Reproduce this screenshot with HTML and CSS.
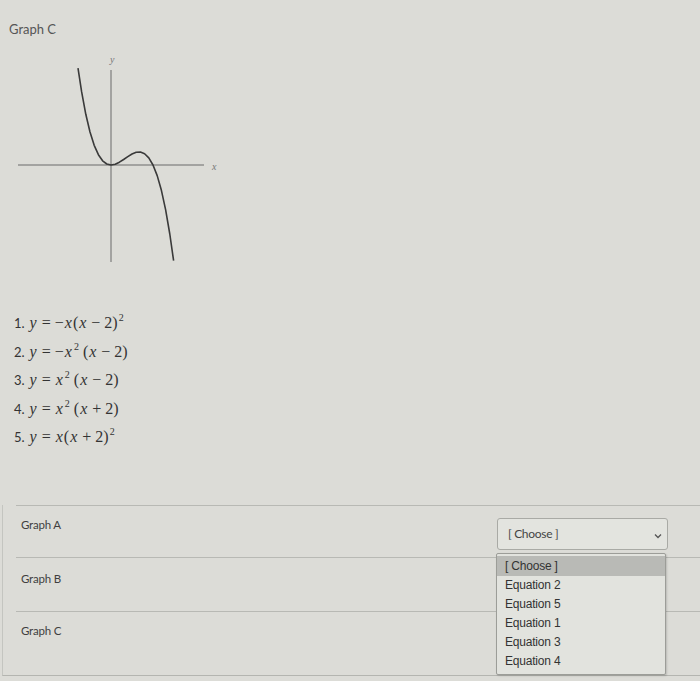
FILE: index.html
```html
<!DOCTYPE html>
<html>
<head>
<meta charset="utf-8">
<link rel="stylesheet" href="styles.css">
</head>
<body>
<div class="page">
  <div class="title">Graph C</div>
  <svg class="graph" width="240" height="230" viewBox="0 50 240 230">
    <line x1="18" y1="165" x2="204" y2="165" stroke="#6a6a6a" stroke-width="1"/>
    <line x1="111" y1="70" x2="111" y2="262" stroke="#6a6a6a" stroke-width="1"/>
    <text x="110" y="63" class="axis-label">y</text>
    <text x="212" y="170" class="axis-label">x</text>
    <polyline fill="none" stroke="#3a3a3a" stroke-width="1.6" stroke-linejoin="round"
      points="78,68.2 81.6,91.7 85.8,114.3 90,132 94.2,145.3 98.4,154.7 102.6,160.8 106.8,164 111,165 115.2,164.2 119.4,162.2 123.6,159.5 127.8,156.6 132,154 136.2,152.3 140.4,152.1 144.6,153.7 148.8,157.9 153,165 157.2,175.6 161.4,190.3 165.6,209.6 169.8,234 173.6,260.7"/>
  </svg>
  <ul class="equations">
    <li><span class="num">1.</span> <i>y</i><span class="op">=</span>−<i>x</i>(<i>x</i><span class="op">−</span>2)<sup>2</sup></li>
    <li><span class="num">2.</span> <i>y</i><span class="op">=</span>−<i>x</i><sup>2</sup> (<i>x</i><span class="op">−</span>2)</li>
    <li><span class="num">3.</span> <i>y</i><span class="op">=</span><i>x</i><sup>2</sup> (<i>x</i><span class="op">−</span>2)</li>
    <li><span class="num">4.</span> <i>y</i><span class="op">=</span><i>x</i><sup>2</sup> (<i>x</i><span class="op">+</span>2)</li>
    <li><span class="num">5.</span> <i>y</i><span class="op">=</span><i>x</i>(<i>x</i><span class="op">+</span>2)<sup>2</sup></li>
  </ul>
  <div class="questions">
    <div class="row row-a">
      <div class="label">Graph A</div>
      <div class="select-wrap">
        <div class="select">
          <span>[ Choose ]</span>
          <svg class="chev" width="8" height="6" viewBox="0 0 8 6"><path d="M1 1.5 L4 4.5 L7 1.5" fill="none" stroke="#555" stroke-width="1.3"/></svg>
        </div>
        <div class="menu">
          <div class="opt active">[ Choose ]</div>
          <div class="opt">Equation 2</div>
          <div class="opt">Equation 5</div>
          <div class="opt">Equation 1</div>
          <div class="opt">Equation 3</div>
          <div class="opt">Equation 4</div>
        </div>
      </div>
    </div>
    <div class="row row-b">
      <div class="label">Graph B</div>
    </div>
    <div class="row row-c">
      <div class="label">Graph C</div>
    </div>
  </div>
</div>
</body>
</html>
```

FILE: styles.css
```css
html, body {
  margin: 0;
  padding: 0;
  background: #dcdcd7;
}
.page {
  width: 700px;
  height: 681px;
  position: relative;
  overflow: hidden;
  font-family: Lato, "Liberation Sans", sans-serif;
  color: #444;
}
.title {
  font-size: 13px;
  line-height: 16px;
  padding: 21px 0 0 9px;
  color: #555;
}
.graph {
  display: block;
  margin-top: 13px;
}
.axis-label {
  font-family: "Liberation Serif", serif;
  font-style: italic;
  font-size: 10px;
  fill: #777;
}
.equations {
  list-style: none;
  margin: 29px 0 0 0;
  padding: 0 0 0 14px;
  font-family: "Liberation Serif", "DejaVu Serif", serif;
  font-size: 16px;
  line-height: 28.5px;
  color: #333;
}
.equations li {
  height: 28.5px;
}
.equations i {
  padding: 0 1px;
}
.equations .op {
  margin: 0 4px;
}
.equations .num {
  font-family: Lato, "Liberation Sans", sans-serif;
  font-size: 13px;
}
.equations sup {
  font-size: 10px;
  line-height: 0;
  vertical-align: 7px;
  margin-left: 1px;
}
.questions {
  margin: 53px 0 0 2px;
  border-bottom: 1px solid #b4b5b0;
  border-left: 1px solid #c4c5c0;
  height: 170px;
}
.row {
  margin-left: 13px;
  border-top: 1px solid #b8b9b4;
  display: flex;
  justify-content: space-between;
  align-items: flex-start;
}
.row-a { height: 51px; }
.row-b { height: 53px; }
.row-c { height: 64px; }
.label {
  font-size: 11.5px;
  line-height: 14px;
  padding: 12px 0 0 5px;
  color: #3f3f3f;
  letter-spacing: -0.2px;
}
.row-b .label { padding-top: 14px; }
.row-c .label { padding-top: 12px; }
.select-wrap {
  position: relative;
  margin: 12px 32px 0 0;
}
.select {
  width: 169px;
  height: 30px;
  border: 1px solid #a9aaa5;
  border-radius: 3px;
  background: #e3e4df;
  box-sizing: content-box;
  display: flex;
  align-items: center;
  justify-content: space-between;
}
.select span {
  font-size: 12px;
  color: #444;
  padding-left: 10px;
  letter-spacing: -0.3px;
}
.chev {
  margin-right: 5px;
  margin-top: 4px;
}
.menu {
  position: absolute;
  left: -1px;
  top: 35px;
  width: 170px;
  height: 122px;
  border: 1px solid #9c9d98;
  border-radius: 2px;
  background: #e2e3de;
  box-shadow: 1px 1px 2px rgba(0,0,0,0.15);
  padding-top: 2px;
  box-sizing: border-box;
}
.opt {
  font-family: "Liberation Sans", Arial, sans-serif;
  font-size: 12px;
  line-height: 19px;
  height: 19px;
  padding-left: 8px;
  color: #333;
  letter-spacing: -0.2px;
}
.opt.active {
  background: #b9bab6;
  height: 20px;
  line-height: 20px;
}
```
